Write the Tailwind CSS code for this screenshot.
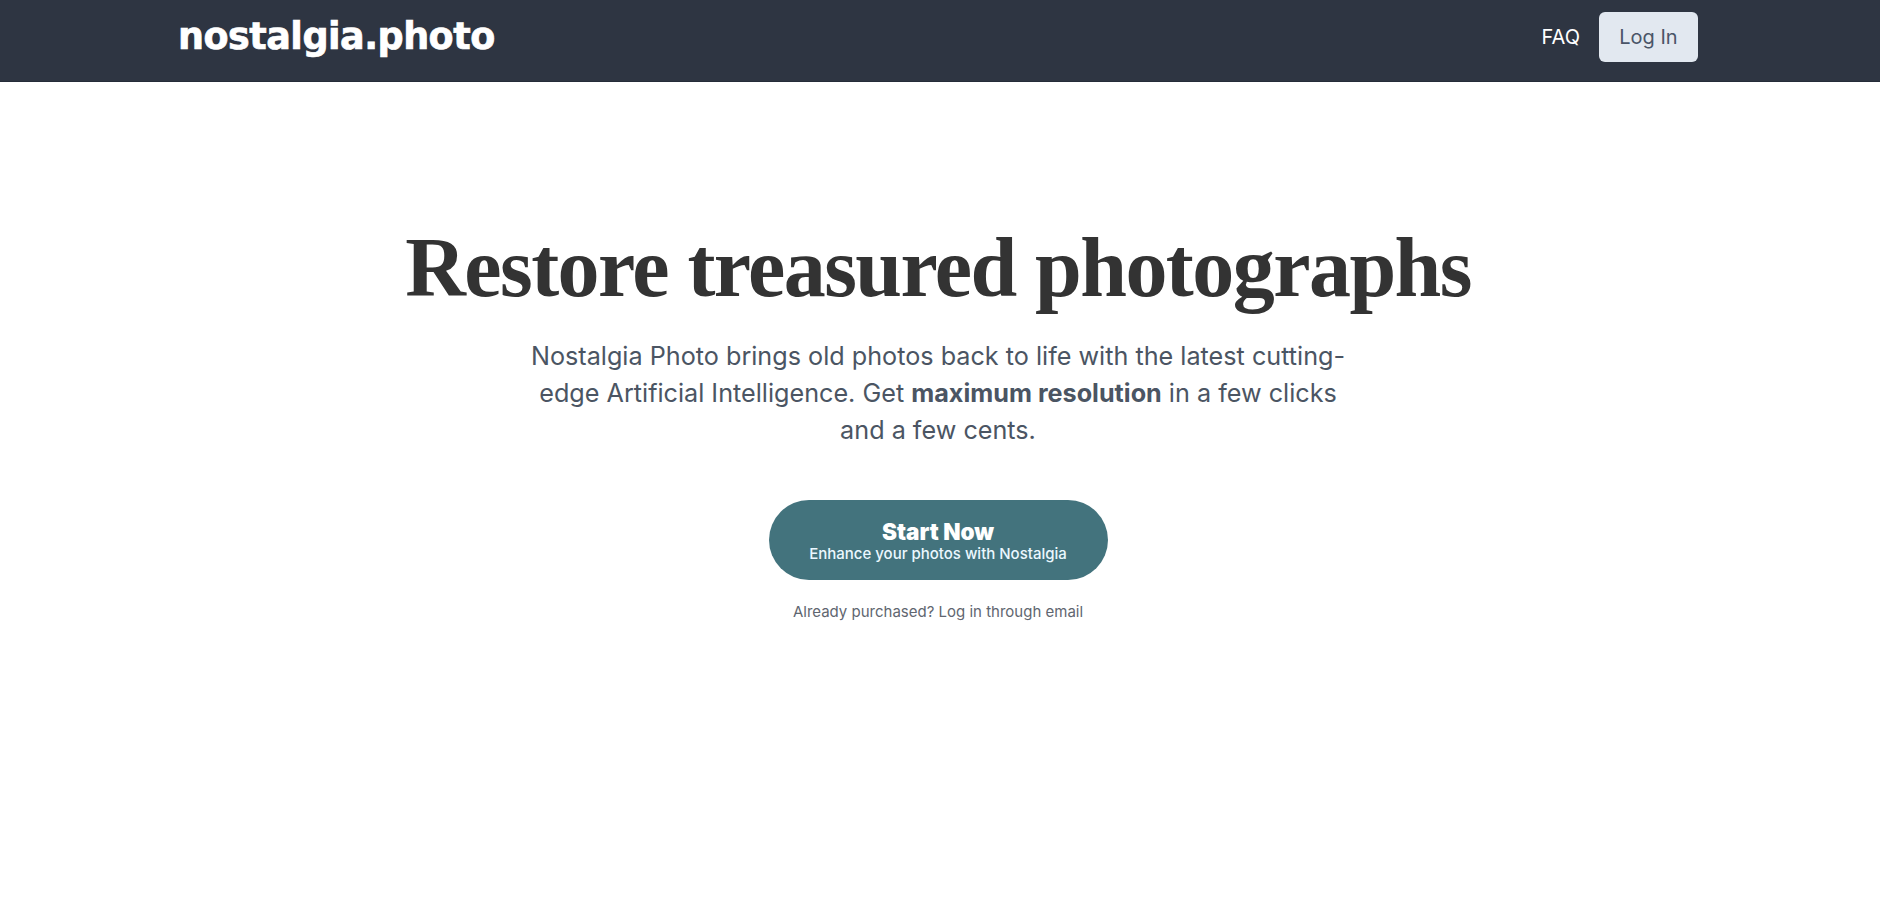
<!DOCTYPE html>
<html><head><meta charset="utf-8"><title>Nostalgia Photo</title>
<script src="https://cdn.jsdelivr.net/npm/@tailwindcss/browser@4"></script></head>
<body class="bg-white font-['Inter',sans-serif]">
<header class="h-[82px] bg-[#2e3542] border-b border-[#1a202c]/40 pr-[4px]">
  <nav class="mx-auto w-[1520px] flex items-center justify-between pt-[12px]">
    <a class="text-white font-['DejaVu_Sans',sans-serif] font-bold text-[36.5px] leading-[50px] tracking-[-0.5px] [-webkit-text-stroke:0.7px_white]">nostalgia.photo</a>
    <div class="flex items-center gap-[19px]">
      <a class="text-white text-[20px]">FAQ</a>
      <button class="w-[99px] h-[50px] rounded-md bg-[#e2e8f0] text-[#4a5568] text-xl font-normal">Log In</button>
    </div>
  </nav>
</header>
<main class="flex flex-col items-center pr-[4px]">
  <h1 class="mt-[144px] font-['Liberation_Serif',serif] font-bold text-[84px] leading-[84px] text-[#333333] tracking-[-1.55px]">Restore treasured photographs</h1>
  <p class="mt-[28px] w-[830px] text-center text-[#4b5563] text-[25.2px] leading-[37px]">Nostalgia Photo brings old photos back to life with the latest cutting-edge Artificial Intelligence. Get <strong class="font-bold">maximum resolution</strong> in a few clicks and a few cents.</p>
  <a class="mt-[51px] w-[339px] h-[80px] rounded-full bg-[#43737d] text-white flex flex-col items-center justify-center">
    <span class="text-[22.5px] leading-[28px] font-black">Start Now</span>
    <span class="-mt-px text-[15px] leading-[18px] font-medium text-[#ebf8ff]">Enhance your photos with Nostalgia</span>
  </a>
  <p class="mt-[21px] text-[15px] text-[#5f6670]">Already purchased? Log in through email</p>
</main>
</body></html>
